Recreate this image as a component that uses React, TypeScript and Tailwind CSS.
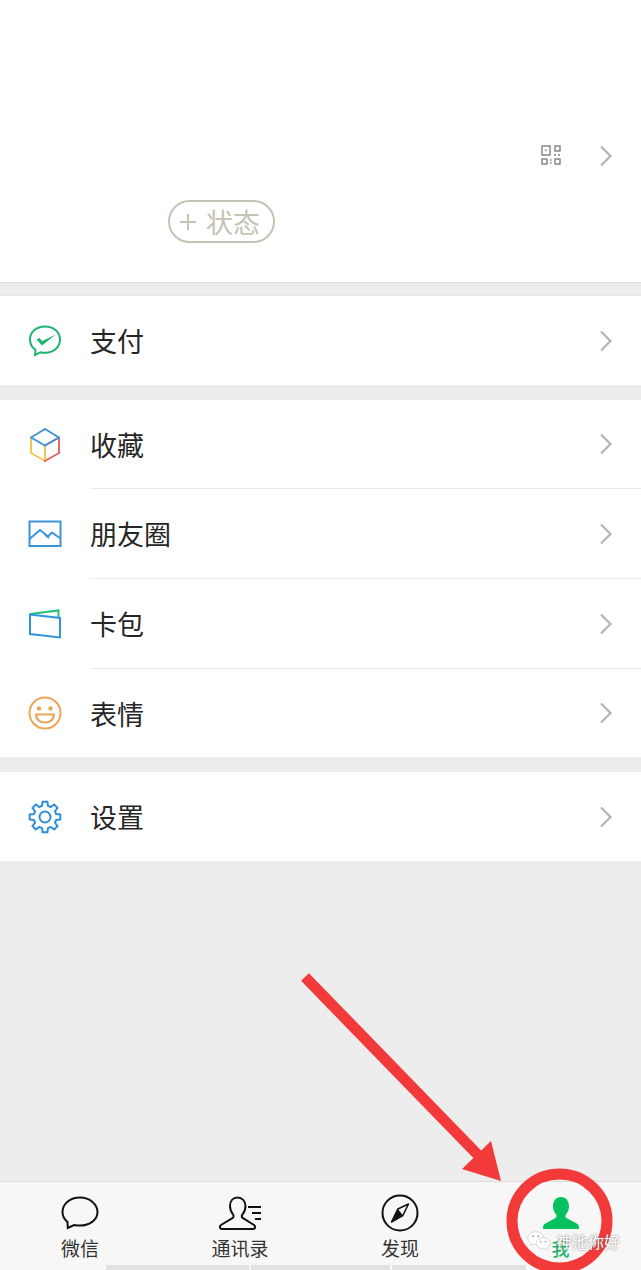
import React from 'react';

const Chevron = () => (
  <svg width="14" height="22" viewBox="0 0 14 22" fill="none" className="shrink-0">
    <path d="M2 1.500 L11.500 11 L2 20.500" stroke="#b4b4b4" strokeWidth="2.200" />
  </svg>
);

const PayIcon = () => (
  <svg width="36" height="34" viewBox="0 0 36 34" fill="none">
    <path d="M18 2.500C9.200 2.500 3 8.300 3 15.500c0 4.300 2.100 8 5.500 10.400L8 31l5.500-2.800c1.400.4 3 .6 4.500.6 8.800 0 15-5.800 15-13.300S26.800 2.500 18 2.500Z" stroke="#1fb56d" strokeWidth="2" />
    <path d="M9.500 15.500L12.500 14l2.700 3L28.500 10.800 15 21.500 9.500 15.500Z" fill="#1fb56d" />
  </svg>
);

const CubeIcon = () => (
  <svg width="34" height="36" viewBox="0 0 34 36" fill="none" strokeWidth="2" strokeLinejoin="round" strokeLinecap="round">
    <path d="M17 18.500V34L3 26V10.500" stroke="#f5c64c" />
    <path d="M17 34l14-8V10.500L17 18.500" stroke="#e7636b" />
    <path d="M3 10.500L17 2l14 8.500-14 8-14-8Z" stroke="#3d93d8" />
  </svg>
);

const MomentsIcon = () => (
  <svg width="34" height="28" viewBox="0 0 34 28" fill="none" stroke="#3a94da" strokeWidth="2">
    <rect x="1.500" y="1.500" width="31" height="24.500" />
    <path d="M1.500 19L12 10l8 6.500 4-4 8.500 6" />
    <path d="M17 14.500l4 3.500" />
  </svg>
);

const CardIcon = () => (
  <svg width="34" height="30" viewBox="0 0 34 30" fill="none" strokeWidth="2">
    <path d="M2 5L30.500 1.500V8" stroke="#25c07a" />
    <path d="M2 5.500L32 9v19.500L2 25V5.500Z" stroke="#2f95dc" />
  </svg>
);

const SmileIcon = () => (
  <svg width="34" height="34" viewBox="0 0 34 34" fill="none">
    <circle cx="17" cy="17" r="15.500" stroke="#eda658" strokeWidth="2" />
    <circle cx="11" cy="12.500" r="2.200" fill="#eda658" />
    <circle cx="22.500" cy="12.500" r="2.200" fill="#eda658" />
    <path d="M8 18.500h18c0 5-4 8-9 8s-9-3-9-8Z" stroke="#eda658" strokeWidth="2" strokeLinejoin="round" />
  </svg>
);

// eight rounded teeth, outer radius 15.5
const gearPath = () => {
  const pt = (deg: number, r: number) => {
    const a = (deg * Math.PI) / 180;
    return `${(17 + r * Math.sin(a)).toFixed(2)} ${(17 - r * Math.cos(a)).toFixed(2)}`;
  };
  let d = '';
  for (let i = 0; i < 8; i++) {
    const c = i * 45;
    d += `${i === 0 ? 'M' : 'L'}${pt(c - 15, 11.500)} L${pt(c - 9, 15.500)} L${pt(c + 9, 15.500)} L${pt(c + 15, 11.500)} `;
  }
  return d + 'Z';
};

const GearIcon = () => (
  <svg width="34" height="34" viewBox="0 0 34 34" fill="none" stroke="#2f8edb" strokeWidth="2" strokeLinejoin="round">
    <path d={gearPath()} />
    <circle cx="17" cy="17" r="5.500" />
  </svg>
);

const QrIcon = () => (
  <svg width="20" height="20" viewBox="0 0 20 20" fill="none" stroke="#808080" strokeWidth="1.400">
    <rect x="1" y="1" width="8" height="9" />
    <rect x="3.900" y="4.500" width="1.600" height="1.600" fill="#808080" stroke="none" />
    <rect x="14" y="1" width="5" height="5" />
    <rect x="1" y="14" width="5" height="5" />
    <rect x="14" y="14" width="5" height="5" />
    <path d="M13 10h2M17 10h2M9 15h1.500M9 18h1.500" strokeWidth="1.600" />
  </svg>
);

const ChatIcon = () => (
  <svg width="38" height="34" viewBox="0 0 38 34" fill="none" stroke="#111" strokeWidth="2">
    <path d="M19 1.500C9 1.500 1.500 7.800 1.500 16c0 3.800 1.900 7.400 5 10l.3 6 6.300-3c1.900.4 3.900.6 5.900.6 10 0 17.500-6 17.500-13.600S29 1.500 19 1.500Z" />
  </svg>
);

const ContactsIcon = () => (
  <svg width="44" height="36" viewBox="0 0 44 36" fill="none" stroke="#111" strokeWidth="2" strokeLinejoin="round">
    <path d="M19.500 2.500c-4.500 0-7.500 3.500-7.500 8.500 0 3.400 1.400 6.400 3 8.300.9 1.200.8 3-.6 3.900L3 30c-1.800 1.300-1.300 4 1 4H35c2.300 0 2.800-2.700 1-4L25 23.200c-1.300-1-1.400-2.700-.5-3.900 1.600-1.900 3-4.900 3-8.300 0-5-3.500-8.500-8-8.500Z" />
    <path d="M30 12h13M34 18h9M37 24h6" />
  </svg>
);

const CompassIcon = () => (
  <svg width="38" height="38" viewBox="0 0 38 38" fill="none" stroke="#111">
    <circle cx="19" cy="19" r="17.500" strokeWidth="2" />
    <path d="M27.500 10L21.800 21.700 10.500 28 16.800 15 27.500 10Z" strokeWidth="1.500" strokeLinejoin="round" />
    <path d="M16.800 15L10.500 28 21.800 21.700Z" fill="#111" strokeWidth="0.500" />
  </svg>
);

const MeIcon = () => (
  <svg width="36" height="34" viewBox="0 0 38 36" fill="#07c160">
    <path d="M19 1c-5.500 0-8.500 4.500-8.500 10 0 3.600 1.700 6.600 3.300 8.500.9 1.200.7 2.900-.6 3.800L2 29.500C.4 30.500 0 32 0 33.500V35h38v-1.500c0-1.500-.4-3-2-4l-11.200-6.200c-1.300-.9-1.500-2.600-.6-3.800 1.600-1.900 3.300-4.900 3.300-8.500C27.500 5.500 24.500 1 19 1Z" />
  </svg>
);

const WechatMark = () => (
  <svg width="24" height="21" viewBox="0 0 30 24" fill="#ffffff" stroke="#cfcfcf" strokeWidth="1">
    <path d="M11 1C5.500 1 1 4.700 1 9.200c0 2.600 1.500 4.800 3.800 6.300L4 18l3-1.500c1.200.3 2.600.5 4 .5C16.500 17 21 13.500 21 9S16.500 1 11 1Z" />
    <path d="M20 8.500c-4.700 0-8.500 3.200-8.500 7s3.800 7 8.500 7c1 0 2-.1 2.900-.4L26 23.500l-.7-2.500c2.200-1.300 3.700-3.300 3.700-5.500 0-3.800-4.300-7-9-7Z" />
    <circle cx="7.500" cy="6.500" r="1.200" fill="#999" stroke="none" />
    <circle cx="14" cy="6.500" r="1.200" fill="#999" stroke="none" />
    <circle cx="17" cy="13.500" r="1" fill="#999" stroke="none" />
    <circle cx="23" cy="13.500" r="1" fill="#999" stroke="none" />
  </svg>
);

type Row = { label: string; icon: React.ReactNode; h: string };

const MenuRow = ({ item, last }: { item: Row; last: boolean }) => (
  <div className={`flex items-center ${item.h}`}>
    <div className="flex w-[90px] shrink-0 justify-center">{item.icon}</div>
    <div className={`flex h-full flex-1 items-center justify-between pr-[28px] ${last ? '' : 'border-b border-[#ececec]'}`}>
      <span className="text-[27px] leading-none text-[#262626]">{item.label}</span>
      <Chevron />
    </div>
  </div>
);

const groupTwo: Row[] = [
  { label: '收藏', icon: <CubeIcon />, h: 'h-[89px]' },
  { label: '朋友圈', icon: <MomentsIcon />, h: 'h-[90px]' },
  { label: '卡包', icon: <CardIcon />, h: 'h-[90px]' },
  { label: '表情', icon: <SmileIcon />, h: 'h-[88px]' },
];

const tabs = [
  { label: '微信', icon: <ChatIcon /> },
  { label: '通讯录', icon: <ContactsIcon /> },
  { label: '发现', icon: <CompassIcon /> },
];

export default function App() {
  return (
    <div
      className="relative flex h-[1270px] w-full flex-col overflow-hidden bg-[#ededed]"
      style={{ fontFamily: '"Noto Sans CJK SC", "Noto Sans", sans-serif' }}
    >
      {/* profile header */}
      <div className="flex h-[283px] shrink-0 flex-col border-b border-[#dedede] bg-white pt-[143px]">
        <div className="flex h-[26px] items-center justify-end gap-[38px] pr-[28px]">
          <div className="-mt-[2px]">
            <QrIcon />
          </div>
          <Chevron />
        </div>
        <div className="mt-[31px] pl-[168px]">
          <div className="flex h-[43px] w-[107px] items-center justify-center gap-[9px] rounded-[22px] border-2 border-[#c6c2b4] pr-[4px] text-[#c6c2b4]">
            <svg width="18" height="18" viewBox="0 0 18 18" stroke="#c6c2b4" strokeWidth="2">
              <path d="M9 1v16M1 9h16" />
            </svg>
            <span className="text-[27px] leading-none">状态</span>
          </div>
        </div>
      </div>

      <div className="mt-[12px] border-t border-[#e6e6e6] bg-white">
        <MenuRow item={{ label: '支付', icon: <PayIcon />, h: 'h-[89px]' }} last />
      </div>

      <div className="mt-[15px] bg-white">
        {groupTwo.map((item, i) => (
          <MenuRow key={item.label} item={item} last={i === groupTwo.length - 1} />
        ))}
      </div>

      <div className="mt-[15px] bg-white">
        <MenuRow item={{ label: '设置', icon: <GearIcon />, h: 'h-[89px]' }} last />
      </div>

      {/* tab bar */}
      <div className="mt-auto flex h-[89px] shrink-0 border-t border-[#dcdcdc] bg-[#f7f7f7]">
        {tabs.map(t => (
          <div key={t.label} className="flex w-[160px] flex-col items-center pt-[12px]">
            <div className="flex h-[38px] items-center">{t.icon}</div>
            <span className="mt-[3px] text-[19px] leading-[26px] text-[#333]">{t.label}</span>
          </div>
        ))}
        <div className="flex w-[161px] flex-col items-center pt-[14px]">
          <MeIcon />
          <span className="mt-[5px] text-[18px] font-medium leading-[26px] text-[#1fb56d]">我</span>
        </div>
      </div>

      {/* home indicator strip */}
      <div className="absolute bottom-0 left-[106px] flex h-[5px] w-[420px] gap-[2px]">
        <div className="w-[143px] bg-[#e2e2e2]" />
        <div className="w-[139px] bg-[#e2e2e2]" />
        <div className="flex-1 bg-[#e2e2e2]" />
      </div>

      {/* red annotation */}
      <svg className="absolute left-0 top-0" width="641" height="1270" viewBox="0 0 641 1270" fill="none">
        <path d="M305 977L478 1155" stroke="#f23a3a" strokeWidth="11" />
        <path d="M462 1169L491 1141 501 1181Z" fill="#f23a3a" />
        <ellipse cx="559.500" cy="1221" rx="47.500" ry="47" stroke="#f23a3a" strokeWidth="11" />
      </svg>

      {/* watermark */}
      <div className="absolute left-[527px] top-[1230px] flex items-center gap-[5px]">
        <WechatMark />
        <span className="text-[16px] leading-none text-white [text-shadow:0_0_2px_#666]">神池你好</span>
      </div>
    </div>
  );
}
